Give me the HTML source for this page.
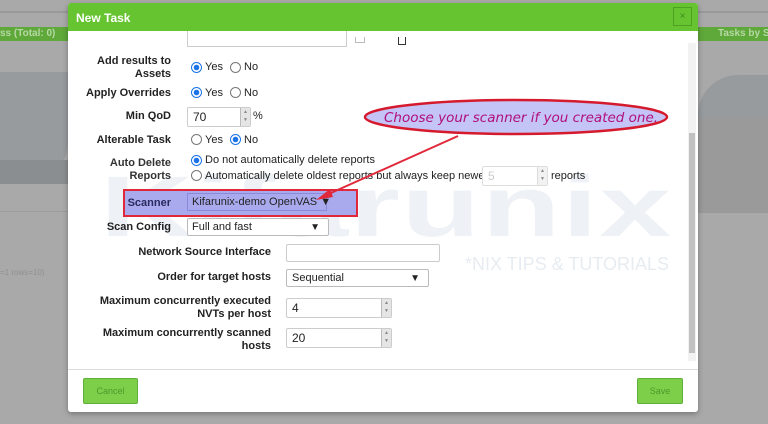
<!DOCTYPE html>
<html><head><style>
*{box-sizing:border-box;margin:0;padding:0}
body{width:768px;height:424px;overflow:hidden;background:#a9a9a9;font-family:"Liberation Sans",sans-serif;position:relative}
.abs{position:absolute}
.lbl{position:absolute;font-weight:bold;font-size:11px;color:#222;text-align:right;line-height:13px}
.t{position:absolute;font-size:11px;color:#222;line-height:13px}
.rad{position:absolute;width:11px;height:11px;border:1px solid #777;border-radius:50%;background:#fff}
.rad.on{border-color:#1a73e8;background:radial-gradient(circle,#1a73e8 0 2.5px,#fff 3px)}
.inp{position:absolute;border:1px solid #ccc;background:#fff;font-size:12px;padding:3px 5px;color:#222;border-radius:2px}
.spin{position:absolute;right:0;top:0;bottom:0;width:10px;background:#e5e5e5;border-left:1px solid #bbb;font-size:5px;color:#888;text-align:center;line-height:8px}
.sel{position:absolute;border:1px solid #bbb;background:#fff;font-size:11px;padding:3px 6px;color:#222;border-radius:2px}
.sel b{position:absolute;right:8px;top:3px;font-size:10px}
</style></head><body>
<div class="abs" style="left:0;top:11px;width:68px;height:2px;background:#999"></div>
<div class="abs" style="left:0;top:27px;width:68px;height:14px;background:#5fa83a;color:#b7d8a5;font-size:10px;padding:1px 0 0 0;font-weight:bold">ss (Total: 0)</div>
<div class="abs" style="left:0;top:72px;width:68px;height:110px;background:#979b9e;border-radius:0 0 40px 0"></div>
<div class="abs" style="left:0;top:160px;width:68px;height:24px;background:#8a8e91"></div>
<div class="abs" style="left:0;top:211px;width:68px;height:1px;background:#9d9d9d"></div>
<div class="abs" style="left:0;top:268px;color:#909090;font-size:8px">=1 rows=10)</div>
<div class="abs" style="left:698px;top:11px;width:70px;height:2px;background:#999"></div>
<div class="abs" style="left:698px;top:27px;width:70px;height:14px;background:#5fa83a;color:#b7d8a5;font-size:10px;padding:1px 0 0 20px;font-weight:bold;white-space:nowrap;overflow:hidden">Tasks by S</div>
<div class="abs" style="left:698px;top:75px;width:70px;height:50px;background:#979b9e;border-radius:40px 0 0 0"></div>
<div class="abs" style="left:698px;top:118px;width:70px;height:95px;background:#9a9a9a"></div>

<div class="abs" style="left:68px;top:3px;width:630px;height:409px;background:#fff;border-radius:3px;box-shadow:0 2px 6px rgba(0,0,0,.3);overflow:hidden">
 <div class="abs" style="left:0;top:0;width:630px;height:28px;background:#66c430;color:#fff;font-weight:bold;font-size:12px;padding:8px 0 0 8px">New Task</div>
 <div class="abs" style="left:605px;top:4px;width:19px;height:19px;border:1px solid #4da020;color:#3d8a1a;font-size:10px;text-align:center;line-height:17px">×</div>
 <div class="abs" style="left:620px;top:40px;width:8px;height:318px;background:#f2f2f2"></div>
 <div class="abs" style="left:621px;top:130px;width:6px;height:220px;background:#c1c1c1"></div>
 <div class="abs" style="left:0;top:366px;width:630px;height:1px;background:#ddd"></div>
 <div class="abs" style="left:15px;top:375px;width:55px;height:26px;background:#7dcf4a;border:1px solid #5fb03a;border-radius:2px;color:#4b9a2b;font-size:9px;text-align:center;line-height:24px">Cancel</div>
 <div class="abs" style="left:569px;top:375px;width:46px;height:26px;background:#7dcf4a;border:1px solid #5fb03a;border-radius:2px;color:#4b9a2b;font-size:9px;text-align:center;line-height:24px">Save</div>
</div>

<div class="abs" style="left:100px;top:162px;font-size:86px;font-weight:bold;color:rgba(160,180,200,.18);line-height:90px;transform:scaleX(1.5);transform-origin:0 0;letter-spacing:1px">Kifarunix</div>
<div class="abs" style="left:465px;top:254px;font-size:18px;color:rgba(160,180,200,.25)">*NIX TIPS &amp; TUTORIALS</div>

<div class="abs" style="left:187px;top:31px;width:160px;height:16px;border:1px solid #ccc;border-top:none"></div>
<div class="abs" style="left:355px;top:37px;width:10px;height:6px;border:1px solid #bbb;border-top:none"></div>
<div class="abs" style="left:398px;top:37px;width:8px;height:8px;border:1px solid #333;border-top:none"></div>

<div class="lbl" style="left:80px;top:55px;width:91px">Add results to<br>Assets</div>
<div class="rad on" style="left:191px;top:62px"></div><div class="t" style="left:205px;top:61px">Yes</div>
<div class="rad" style="left:230px;top:62px"></div><div class="t" style="left:244px;top:61px">No</div>

<div class="lbl" style="left:70px;top:87px;width:101px">Apply Overrides</div>
<div class="rad on" style="left:191px;top:87px"></div><div class="t" style="left:205px;top:87px">Yes</div>
<div class="rad" style="left:230px;top:87px"></div><div class="t" style="left:244px;top:87px">No</div>

<div class="lbl" style="left:70px;top:110px;width:101px">Min QoD</div>
<div class="inp" style="left:187px;top:107px;width:64px;height:20px;padding:2px 5px">70<div class="spin">▲<br>▼</div></div>
<div class="t" style="left:253px;top:110px">%</div>

<div class="lbl" style="left:70px;top:134px;width:101px">Alterable Task</div>
<div class="rad" style="left:191px;top:134px"></div><div class="t" style="left:205px;top:134px">Yes</div>
<div class="rad on" style="left:230px;top:134px"></div><div class="t" style="left:244px;top:134px">No</div>

<div class="lbl" style="left:70px;top:157px;width:101px;font-weight:bold;color:#333">Auto Delete<br>Reports</div>
<div class="rad on" style="left:191px;top:155px"></div><div class="t" style="left:205px;top:154px">Do not automatically delete reports</div>
<div class="rad" style="left:191px;top:170px"></div><div class="t" style="left:205px;top:170px">Automatically delete oldest reports but always keep newest</div>
<div class="inp" style="left:482px;top:166px;width:66px;height:20px;padding:2px 5px;color:#ccc;border-color:#ddd">5<div class="spin" style="background:#f2f2f2;border-color:#ddd">▲<br>▼</div></div>
<div class="t" style="left:551px;top:170px">reports</div>

<div class="abs" style="left:123px;top:189px;width:235px;height:28px;background:#a9a9ee;border:2px solid #e0283a"></div>
<div class="lbl" style="left:110px;top:197px;width:61px;color:#2a2a60">Scanner</div>
<div class="abs" style="left:187px;top:193px;width:140px;height:18px;border:1px solid #8a8ad8;font-size:11px;color:#222;padding:2px 4px;white-space:nowrap">Kifarunix-demo OpenVAS ▼</div>

<div class="lbl" style="left:70px;top:221px;width:101px">Scan Config</div>
<div class="sel" style="left:187px;top:218px;width:142px;height:18px;padding:2px 4px">Full and fast<b>▼</b></div>

<div class="lbl" style="left:110px;top:246px;width:161px">Network Source Interface</div>
<div class="inp" style="left:286px;top:244px;width:154px;height:18px"></div>

<div class="lbl" style="left:110px;top:271px;width:161px">Order for target hosts</div>
<div class="sel" style="left:286px;top:269px;width:143px;height:18px;padding:2px 5px">Sequential<b>▼</b></div>

<div class="lbl" style="left:90px;top:295px;width:181px">Maximum concurrently executed<br>NVTs per host</div>
<div class="inp" style="left:286px;top:298px;width:106px;height:20px;padding:2px 5px">4<div class="spin">▲<br>▼</div></div>

<div class="lbl" style="left:90px;top:327px;width:181px">Maximum concurrently scanned<br>hosts</div>
<div class="inp" style="left:286px;top:328px;width:106px;height:20px;padding:2px 5px">20<div class="spin">▲<br>▼</div></div>

<svg class="abs" style="left:0;top:0" width="768" height="424">
 <line x1="458" y1="136" x2="322" y2="197" stroke="#e0283a" stroke-width="2"/>
 <polygon points="316,200 330,189 333,197" fill="#e0283a"/>
 <ellipse cx="516" cy="117" rx="151" ry="17" fill="#c4c4f6" stroke="#d61a2e" stroke-width="2.5"/>
 <text x="384" y="122" font-family="DejaVu Sans, sans-serif" font-style="italic" font-size="13.5" fill="#b0107a">Choose your scanner if you created one.</text>
</svg>
</body></html>
